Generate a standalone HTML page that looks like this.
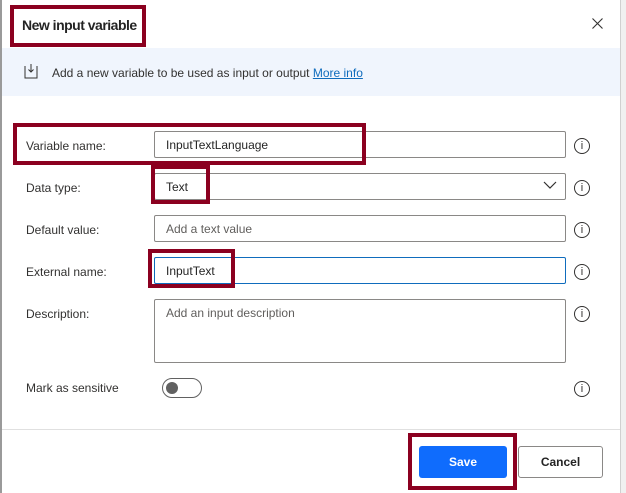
<!DOCTYPE html>
<html><head><meta charset="utf-8"><style>
*{box-sizing:border-box;margin:0;padding:0}
body{width:626px;height:493px;background:#fff;font-family:"Liberation Sans",sans-serif;position:relative;overflow:hidden;color:#242424}
.a{position:absolute}
.lbl{position:absolute;left:26px;font-size:12px;color:#323130}
.inp{position:absolute;left:154px;width:412px;height:27px;border:1px solid #8a8886;border-radius:2px;font-size:12px;padding:6px 11px;color:#242424}
.ph{color:#605e5c}
.red{position:absolute;border:4px solid #8b0020}
.info{position:absolute;left:574px;width:16px;height:16px;border:1.2px solid #323130;border-radius:50%;font-size:11px;text-align:center;line-height:14px;color:#323130}
</style></head><body>
<div class="a" style="left:0;top:0;width:2px;height:493px;background:#9a9a9a"></div>
<div class="a" style="left:620px;top:0;width:6px;height:493px;background:#f0f0f0;border-left:1px solid #d0d0d0"></div>
<div class="a" style="left:22px;top:17px;font-size:14px;font-weight:bold;color:#242424;letter-spacing:-0.5px">New input variable</div>
<svg class="a" style="left:592px;top:18px" width="11" height="11" viewBox="0 0 11 11"><path d="M0.5 0.5L10.5 10.5M10.5 0.5L0.5 10.5" stroke="#323130" stroke-width="1.1"/></svg>
<div class="a" style="left:2px;top:48px;width:618px;height:48px;background:#f0f5fd"></div>
<svg class="a" style="left:24px;top:63px" width="14" height="16" viewBox="0 0 14 16"><path d="M1 3V15H13V3" fill="none" stroke="#323130" stroke-width="1"/><path d="M7 1V9M4.5 6.5L7 9L9.5 6.5" fill="none" stroke="#323130" stroke-width="1"/></svg>
<div class="a" style="left:52px;top:66px;font-size:12px;color:#323130">Add a new variable to be used as input or output <span style="color:#0f6cbd;text-decoration:underline">More info</span></div>

<div class="lbl" style="top:139px">Variable name:</div>
<div class="inp" style="top:131px">InputTextLanguage</div>
<div class="info" style="top:138px">i</div>

<div class="lbl" style="top:181px">Data type:</div>
<div class="inp" style="top:173px">Text</div>
<svg class="a" style="left:543px;top:181px" width="14" height="9" viewBox="0 0 14 9"><path d="M1 1L7 7L13 1" fill="none" stroke="#323130" stroke-width="1.2"/></svg>
<div class="info" style="top:180px">i</div>

<div class="lbl" style="top:223px">Default value:</div>
<div class="inp ph" style="top:215px">Add a text value</div>
<div class="info" style="top:222px">i</div>

<div class="lbl" style="top:265px">External name:</div>
<div class="inp" style="top:257px;border-color:#0f6cbd">InputText</div>
<div class="info" style="top:264px">i</div>

<div class="lbl" style="top:307px">Description:</div>
<div class="inp ph" style="top:299px;height:64px">Add an input description</div>
<div class="info" style="top:306px">i</div>

<div class="lbl" style="top:381px">Mark as sensitive</div>
<div class="a" style="left:162px;top:378px;width:40px;height:20px;border:1px solid #616161;border-radius:10px"></div>
<div class="a" style="left:166px;top:382px;width:12px;height:12px;border-radius:50%;background:#616161"></div>
<div class="info" style="top:381px">i</div>

<div class="a" style="left:2px;top:429px;width:618px;height:1px;background:#e0e0e0"></div>
<div class="a" style="left:419px;top:446px;width:88px;height:32px;background:#0f6cfd;border-radius:3px;color:#fff;font-size:12px;font-weight:bold;text-align:center;line-height:32px">Save</div>
<div class="a" style="left:518px;top:446px;width:85px;height:32px;border:1px solid #8a8886;border-radius:3px;font-size:12px;font-weight:bold;text-align:center;line-height:30px;color:#242424">Cancel</div>

<div class="red" style="left:10px;top:5px;width:136px;height:42px"></div>
<div class="red" style="left:13px;top:123px;width:353px;height:42px"></div>
<div class="red" style="left:151px;top:165px;width:59px;height:39px"></div>
<div class="red" style="left:148px;top:249px;width:87px;height:39px"></div>
<div class="red" style="left:408px;top:433px;width:109px;height:57px"></div>
</body></html>
